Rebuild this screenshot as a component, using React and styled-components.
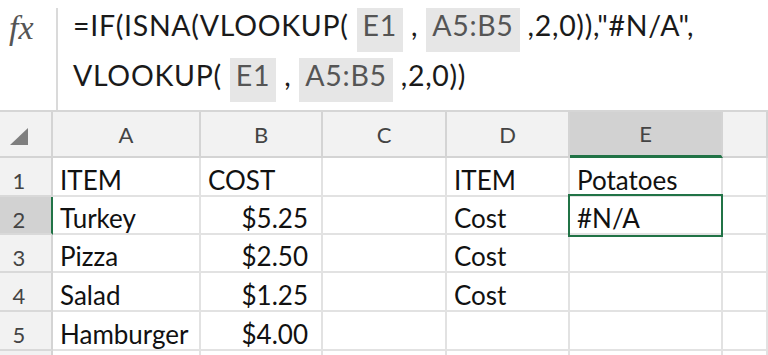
import React from 'react';
import styled, { createGlobalStyle, css } from 'styled-components';

const GlobalStyle = createGlobalStyle`
  html, body {
    margin: 0;
    padding: 0;
    background: #fff;
    overflow: hidden;
  }
  body {
    font-family: Lato, "Open Sans", sans-serif;
  }
`;

const Page = styled.div`
  width: 768px;
  height: 355px;
  overflow: hidden;
  background: #fff;
`;

const FormulaBar = styled.div`
  display: flex;
  height: 110px;
  border-bottom: 2px solid #d6d6d6;
`;

const FxBox = styled.div`
  flex: 0 0 58px;
  box-sizing: border-box;
  margin-top: 8px;
  border-right: 2px solid #dadada;
  padding: 3px 0 0 9px;
  font-family: "Liberation Serif", serif;
  font-style: italic;
  font-size: 34px;
  line-height: 34px;
  color: #555;
`;

const Formula = styled.div`
  flex: 1;
  padding-left: 15px;
  font-size: 28.5px;
  line-height: 50px;
  letter-spacing: 0.7px;
  color: #1a1a1a;
  white-space: nowrap;
`;

const FormulaLine = styled.div``;

const Ref = styled.span`
  background: #e6e6e6;
  color: #555;
  padding: 0 6px 10px;
`;

const Sheet = styled.div`
  display: grid;
  grid-template-columns: 53px 148px 122px 124px 123px 153px 1fr;
  grid-template-rows: 46px 39px 38px 38px 39px 39px 40px;
`;

const Cell = styled.div`
  position: relative;
  box-sizing: border-box;
  display: flex;
  align-items: center;
  padding: 6px 7px 0;
  border-right: 2px solid #e2e2e2;
  border-bottom: 2px solid #e2e2e2;
  font-size: 26px;
  color: #111;
  white-space: nowrap;
  justify-content: ${(p) => (p.$right ? 'flex-end' : 'flex-start')};
  padding-right: ${(p) => (p.$right ? '13px' : '7px')};

  ${(p) =>
    p.$active &&
    css`
      &::after {
        content: '';
        position: absolute;
        top: -3px;
        left: -2px;
        right: -2px;
        bottom: -4px;
        border: 2px solid #217346;
        z-index: 2;
      }
    `}
`;

const Corner = styled.div`
  box-sizing: border-box;
  display: flex;
  align-items: flex-end;
  padding: 0 0 11px 10px;
  background: #f2f2f2;
  border-right: 2px solid #d4d4d4;
  border-bottom: 2px solid #d4d4d4;
`;

const ColHead = styled.div`
  box-sizing: border-box;
  display: flex;
  align-items: center;
  justify-content: center;
  background: ${(p) => (p.$selected ? '#d2d2d2' : '#f2f2f2')};
  border-right: 2px solid #d4d4d4;
  border-bottom: ${(p) => (p.$selected ? '3px solid #217346' : '2px solid #d4d4d4')};
  font-size: 22px;
  color: #444;
`;

const RowHead = styled.div`
  box-sizing: border-box;
  display: flex;
  align-items: center;
  justify-content: center;
  padding: 8px 13px 0 0;
  background: ${(p) => (p.$selected ? '#d2d2d2' : '#f2f2f2')};
  border-right: ${(p) => (p.$selected ? '2px solid #217346' : '2px solid #d4d4d4')};
  border-bottom: 2px solid #d9d9d9;
  font-size: 22px;
  color: #444;
`;

const columns = ['A', 'B', 'C', 'D', 'E', ''];

const rows = [
  ['ITEM', 'COST', '', 'ITEM', 'Potatoes', ''],
  ['Turkey', '$5.25', '', 'Cost', '#N/A', ''],
  ['Pizza', '$2.50', '', 'Cost', '', ''],
  ['Salad', '$1.25', '', 'Cost', '', ''],
  ['Hamburger', '$4.00', '', '', '', ''],
  ['', '', '', '', '', ''],
];

function SelectAll() {
  return (
    <svg width="18" height="17" viewBox="0 0 18 17">
      <polygon points="18,0 18,17 0,17" fill="#7f7f7f" />
    </svg>
  );
}

export default function App() {
  return (
    <Page>
      <GlobalStyle />
      <FormulaBar>
        <FxBox>fx</FxBox>
        <Formula>
          <FormulaLine>
            =IF(ISNA(VLOOKUP( <Ref>E1</Ref> , <Ref>A5:B5</Ref> ,2,0)),"#N/A",
          </FormulaLine>
          <FormulaLine>
            VLOOKUP( <Ref>E1</Ref> , <Ref>A5:B5</Ref> ,2,0))
          </FormulaLine>
        </Formula>
      </FormulaBar>
      <Sheet>
        <Corner>
          <SelectAll />
        </Corner>
        {columns.map((c, i) => (
          <ColHead key={i} $selected={c === 'E'}>
            {c}
          </ColHead>
        ))}
        {rows.map((row, r) => (
          <React.Fragment key={r}>
            <RowHead $selected={r === 1}>{r < 5 ? r + 1 : ''}</RowHead>
            {row.map((v, c) => (
              <Cell key={c} $right={c === 1 && r > 0} $active={r === 1 && c === 4}>
                {v}
              </Cell>
            ))}
          </React.Fragment>
        ))}
      </Sheet>
    </Page>
  );
}
